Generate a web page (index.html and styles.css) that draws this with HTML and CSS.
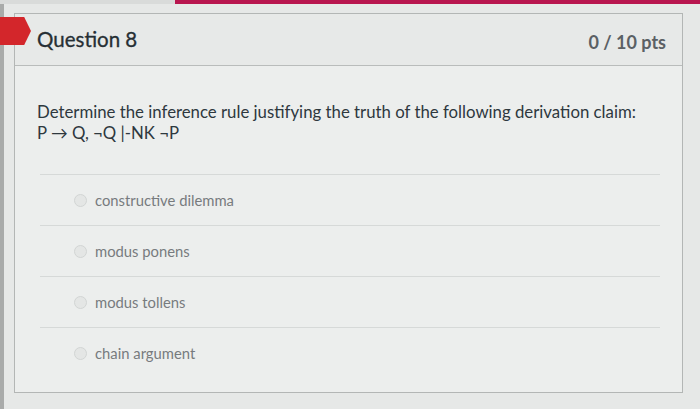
FILE: index.html
```html
<!DOCTYPE html>
<html>
<head>
<meta charset="utf-8">
<link rel="stylesheet" href="styles.css">
</head>
<body>
<div class="topbar"><div class="topbar-gray"></div><div class="topbar-red"></div></div>
<div class="frame">
  <div class="edge"></div>
  <div class="card">
    <div class="flag"></div>
    <div class="card-header">
      <span class="q-title">Question 8</span>
      <span class="q-pts">0 / 10 pts</span>
    </div>
    <div class="card-body">
      <p class="q-text">Determine the inference rule justifying the truth of the following derivation claim:<br>P → Q, ¬Q |-NK ¬P</p>
      <div class="answers">
        <div class="answer"><span class="radio"></span><span>constructive dilemma</span></div>
        <div class="answer"><span class="radio"></span><span>modus ponens</span></div>
        <div class="answer"><span class="radio"></span><span>modus tollens</span></div>
        <div class="answer"><span class="radio"></span><span>chain argument</span></div>
      </div>
    </div>
  </div>
</div>
</body>
</html>
```
FILE: styles.css
```css
html, body {
  margin: 0;
  padding: 0;
}
body {
  width: 700px;
  height: 409px;
  overflow: hidden;
  background: #e6e8e7;
  font-family: Lato, "Open Sans", sans-serif;
  position: relative;
}
.topbar {
  display: flex;
  height: 4px;
}
.topbar-gray {
  width: 175px;
  background: #d9dbda;
}
.topbar-red {
  flex: 1;
  background: #b8164f;
}
.frame {
  display: flex;
  height: 405px;
}
.edge {
  width: 4px;
  background: #a9abaa;
}
.card {
  margin: 9px 0 0 10px;
  width: 667px;
  height: 378px;
  border: 1px solid #b3b6b5;
  background: #eceeed;
  display: flex;
  flex-direction: column;
}
.flag {
  position: absolute;
  left: 0;
  top: 17px;
  width: 31px;
  height: 28px;
  background: #d3262b;
  clip-path: polygon(0 0, 78% 0, 100% 50%, 78% 100%, 0 100%);
}
.card-header {
  height: 51px;
  border-bottom: 1px solid #b9bcbb;
  background: #e7e9e8;
  display: flex;
  align-items: center;
  justify-content: space-between;
  padding: 0 16px 0 22px;
}
.q-title {
  font-size: 20.5px;
  color: #262f34;
  position: relative;
  top: -1px;
  -webkit-text-stroke: 0.3px #262f34;
}
.q-pts {
  font-size: 18px;
  font-weight: 700;
  color: #5b6064;
  position: relative;
  top: 2px;
}
.card-body {
  padding: 35px 0 0 22px;
}
.q-text {
  margin: 0;
  font-size: 16.8px;
  line-height: 21px;
  color: #2e383e;
}
.answers {
  margin: 31px 0 0 3px;
  width: 620px;
}
.answer {
  height: 50px;
  border-top: 1px solid #d6d9d8;
  display: flex;
  align-items: center;
  padding-left: 34px;
  font-size: 14.8px;
  color: #777b7e;
}
.radio {
  width: 11px;
  height: 11px;
  border: 1px solid #d2d5d4;
  border-radius: 50%;
  background: #e4e6e5;
  margin-right: 8px;
}
```
